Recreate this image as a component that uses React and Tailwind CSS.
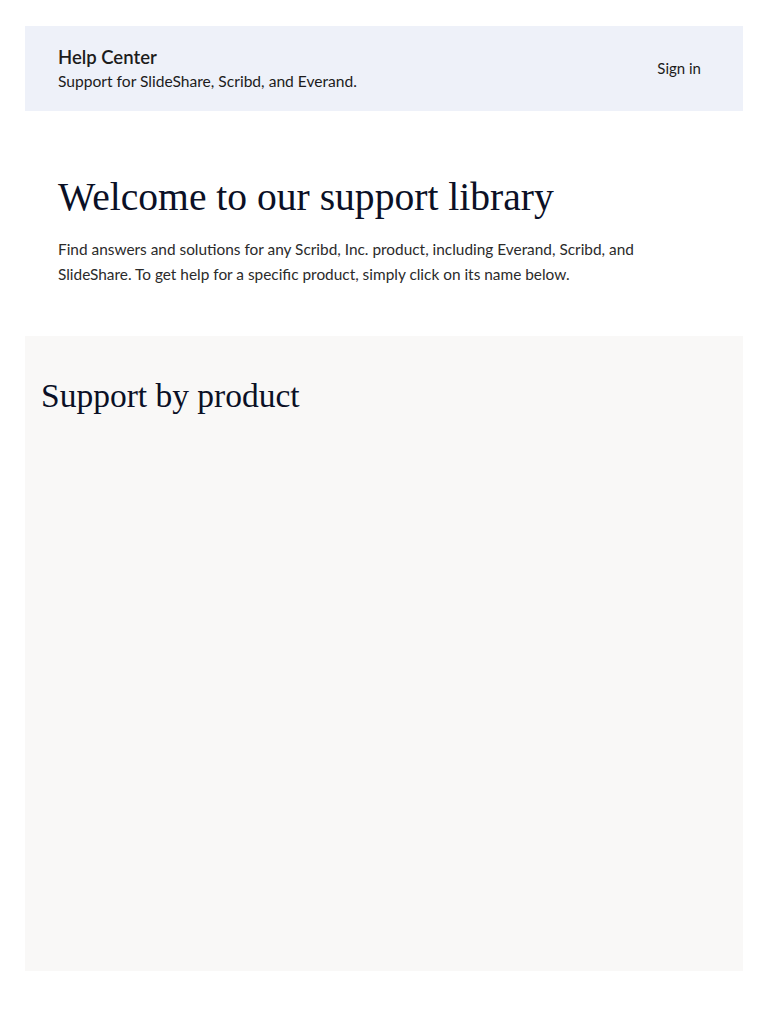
import React from 'react'

export default function App() {
  return (
    <div className="min-h-[1024px] bg-white px-[25px] pt-[26px] font-['Lato','Liberation_Sans',sans-serif]">
      {/* header */}
      <header className="flex h-[85px] items-center justify-between bg-[#eef1f9] pl-[33px] pr-[42px]">
        <div className="-mt-[2px]">
          <div className="text-[18.5px] font-semibold leading-[24px] text-[#1c1c1c]">Help Center</div>
          <div className="mt-[2px] text-[15.6px] leading-[20px] text-[#1c1c1c]">Support for SlideShare, Scribd, and Everand.</div>
        </div>
        <a className="text-[15px] text-[#1c1c1c]">Sign in</a>
      </header>

      {/* hero */}
      <section className="px-[33px] pt-[64px] pb-[49px]">
        <h1 className="font-['Liberation_Serif',serif] text-[39.6px] leading-[44px] text-[#0b1026]">
          Welcome to our support library
        </h1>
        <p className="mt-[18px] max-w-[600px] text-[15.4px] leading-[25px] text-[#2b2b2b]">
          Find answers and solutions for any Scribd, Inc. product, including Everand, Scribd, and SlideShare. To get help for a specific product, simply click on its name below.
        </p>
      </section>

      {/* products */}
      <section className="h-[635px] bg-[#f9f8f7] px-[16px] pt-[40px]">
        <h2 className="font-['Liberation_Serif',serif] text-[33.5px] leading-[40px] text-[#0b1026]">Support by product</h2>
      </section>
    </div>
  )
}
